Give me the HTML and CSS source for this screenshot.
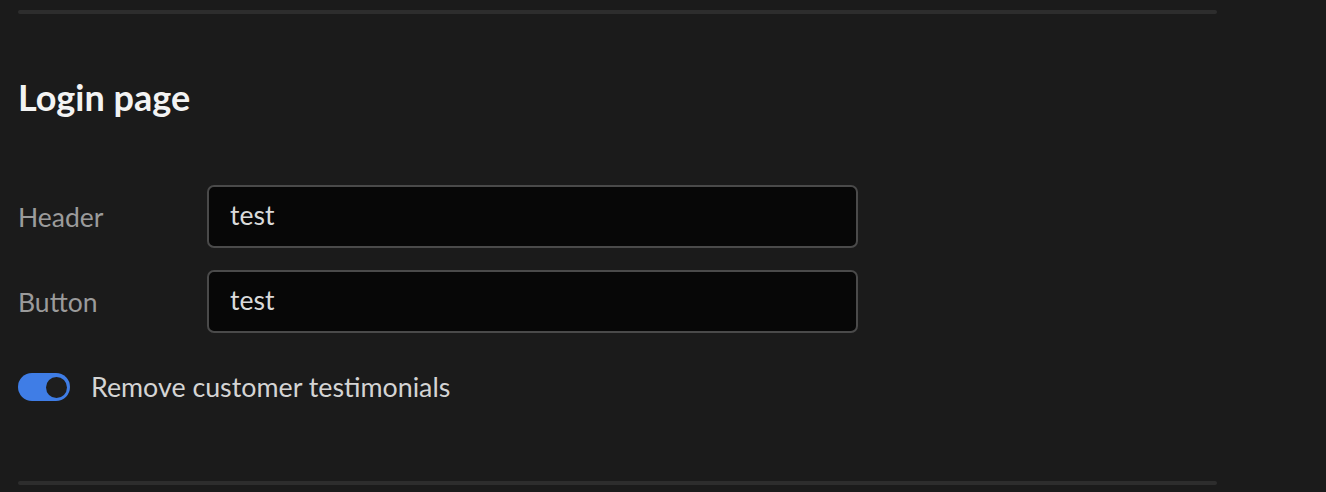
FILE: index.html
```html
<!DOCTYPE html>
<html lang="en">
<head>
<meta charset="utf-8">
<title>Login page settings</title>
<link rel="stylesheet" href="styles.css">
</head>
<body>
<div class="panel">
  <div class="divider divider-top"></div>
  <h2 class="title">Login page</h2>
  <div class="form">
    <label class="label" for="f-header">Header</label>
    <input class="input" id="f-header" type="text" value="test">
    <label class="label" for="f-button">Button</label>
    <input class="input" id="f-button" type="text" value="test">
  </div>
  <label class="switch-row">
    <span class="switch"><span class="knob"></span></span>
    <span class="switch-text">Remove customer testimonials</span>
  </label>
  <div class="divider divider-bottom"></div>
</div>
</body>
</html>
```
FILE: styles.css
```css
html, body {
  margin: 0;
  padding: 0;
  background: #1b1b1b;
}
body {
  font-family: Lato, "Noto Sans", sans-serif;
  height: 492px;
  overflow: hidden;
}
.panel {
  padding: 10px 0 0 18px;
  width: 1199px;
}
.divider {
  height: 4px;
  border-radius: 2px;
  background: #2d2d2d;
}
.title {
  margin: 61px 0 0 0;
  font-size: 36px;
  line-height: 44px;
  font-weight: 700;
  color: #f3f3f3;
}
.form {
  margin-top: 66px;
  display: grid;
  grid-template-columns: 189px 651px;
  row-gap: 22px;
  align-items: center;
}
.label {
  font-size: 26.5px;
  color: #9b9b9b;
  padding-top: 1px;
}
.input {
  box-sizing: border-box;
  height: 63px;
  width: 651px;
  margin: 0;
  padding: 0 0 4px 21px;
  border: 2px solid #4a4a4a;
  border-radius: 7px;
  background: #070707;
  color: #dadada;
  font-family: inherit;
  font-size: 26.5px;
  outline: none;
}
.switch-row {
  margin-top: 40px;
  display: flex;
  align-items: center;
  gap: 21px;
  height: 28px;
}
.switch {
  position: relative;
  width: 52px;
  height: 28px;
  border-radius: 14px;
  background: #3f7de6;
  flex: none;
}
.knob {
  position: absolute;
  top: 3.5px;
  left: 28px;
  width: 21px;
  height: 21px;
  border-radius: 50%;
  background: #1e1e1e;
}
.switch-text {
  font-size: 26.8px;
  color: #d4d4d4;
}
.divider-bottom {
  margin-top: 80px;
}
```
